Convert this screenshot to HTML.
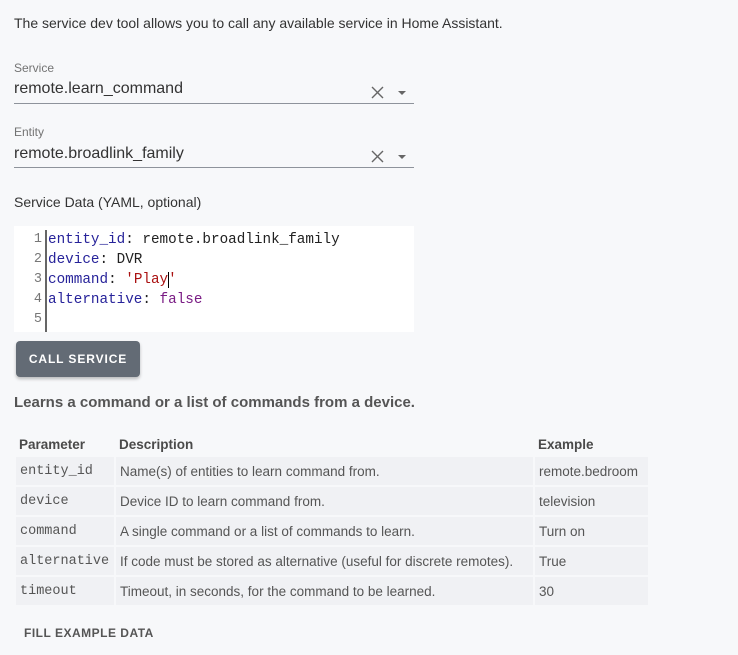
<!DOCTYPE html>
<html><head><meta charset="utf-8"><style>
*{margin:0;padding:0;box-sizing:border-box}
body{width:738px;height:655px;background:#f7f8fa;font-family:"Liberation Sans",sans-serif;color:#212121;position:relative;overflow:hidden}
.a{position:absolute;white-space:nowrap}
.lbl{font-size:12px;color:#737373}
.val{font-size:16px;color:#333}
.line{position:absolute;left:14px;width:400px;height:1px;background:#8e939b}
.x{position:absolute}
.tri{position:absolute;width:0;height:0;border-left:4px solid transparent;border-right:4px solid transparent;border-top:4px solid #666}
.code{position:absolute;left:14px;top:226px;width:400px;height:106px;background:#fff;font-family:"Liberation Mono",monospace;font-size:14.3px}
.ln{position:absolute;left:0;width:33px;text-align:right;color:#777;padding-right:3px;border-right:2px solid #666;font-size:13.5px}
.cl{position:absolute;left:34px;line-height:20px}
.k{color:#27239a}.s{color:#a11}.b{color:#7a1c84}
.btn{position:absolute;left:16px;top:341px;width:124px;height:36px;background:#636b75;border-radius:4px;color:#fff;font-size:12px;font-weight:bold;letter-spacing:0.9px;text-align:center;line-height:36px;box-shadow:0 2px 3px rgba(0,0,0,.25)}
table{position:absolute;left:14px;top:431px;border-spacing:2px;font-size:14px;color:#555}
th{text-align:left;font-weight:bold;height:22px;padding:0 3px;color:#4a4a4a;font-size:13.5px}
td{background:#f0f1f4;height:28px;padding:0 4px;font-size:13.5px}
td.m{font-family:"Liberation Mono",monospace;font-size:13.5px}
</style></head><body>
<div class="a" style="left:14px;top:15px;font-size:14px;color:#333">The service dev tool allows you to call any available service in Home Assistant.</div>
<div class="a lbl" style="left:14px;top:61px">Service</div>
<div class="a val" style="left:14px;top:80px">remote.learn_command</div>
<svg class="x" style="left:371px;top:86px" width="13" height="13" viewBox="0 0 13 13"><path d="M1 1L12 12M12 1L1 12" stroke="#666" stroke-width="1.4"/></svg><div class="tri" style="left:398px;top:91px"></div>
<div class="line" style="top:103px"></div>
<div class="a lbl" style="left:14px;top:125px">Entity</div>
<div class="a val" style="left:14px;top:145px">remote.broadlink_family</div>
<svg class="x" style="left:371px;top:150px" width="13" height="13" viewBox="0 0 13 13"><path d="M1 1L12 12M12 1L1 12" stroke="#666" stroke-width="1.4"/></svg><div class="tri" style="left:398px;top:155px"></div>
<div class="line" style="top:167px"></div>
<div class="a" style="left:14px;top:194px;font-size:14px;color:#333">Service Data (YAML, optional)</div>
<div class="code">
<div class="ln" style="top:4px;height:102px;line-height:20px">1<br>2<br>3<br>4<br>5</div>
<div class="cl" style="top:4px"><span class="k">entity_id</span>: remote.broadlink_family<br><span class="k">device</span>: DVR<br><span class="k">command</span>: <span class="s">'Play<span style="border-left:1px solid #000;margin-right:-1px"></span>'</span><br><span class="k">alternative</span>: <span class="b">false</span></div>
</div>
<div class="btn">CALL SERVICE</div>
<div class="a" style="left:14px;top:394px;font-size:15px;font-weight:bold;color:#555">Learns a command or a list of commands from a device.</div>
<table>
<tr><th style="width:98px">Parameter</th><th style="width:417px">Description</th><th style="width:113px">Example</th></tr>
<tr><td class="m">entity_id</td><td>Name(s) of entities to learn command from.</td><td>remote.bedroom</td></tr>
<tr><td class="m">device</td><td>Device ID to learn command from.</td><td>television</td></tr>
<tr><td class="m">command</td><td>A single command or a list of commands to learn.</td><td>Turn on</td></tr>
<tr><td class="m">alternative</td><td>If code must be stored as alternative (useful for discrete remotes).</td><td>True</td></tr>
<tr><td class="m">timeout</td><td>Timeout, in seconds, for the command to be learned.</td><td>30</td></tr>
</table>
<div class="a" style="left:24px;top:626px;font-size:12px;font-weight:bold;letter-spacing:0.5px;color:#555">FILL EXAMPLE DATA</div>
</body></html>
